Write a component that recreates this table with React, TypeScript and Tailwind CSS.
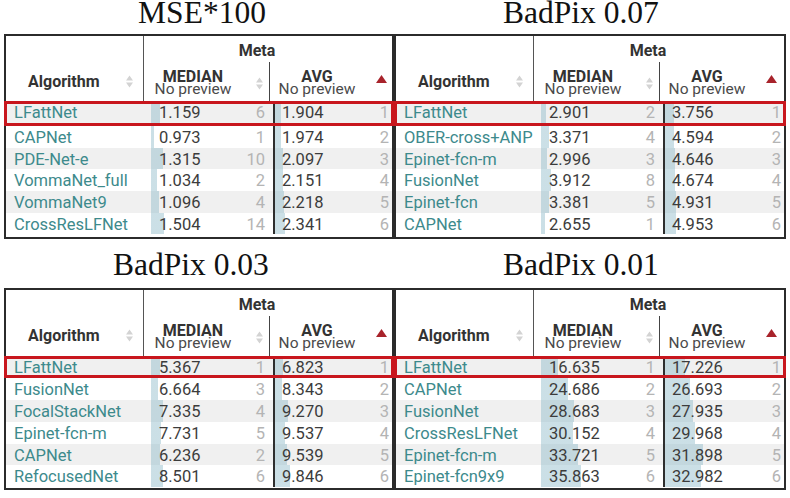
import React from "react";

type Row = { n: string; m: string; mr: number; mb: number; a: string; ar: number; ab: number };

const r = (n: string, m: string, mr: number, mb: number, a: string, ar: number, ab: number): Row => ({ n, m, mr, mb, a, ar, ab });

type Tbl = { title: string; shift: string; width: string; rows: Row[] };

const topTables: Tbl[] = [
  {
    title: "MSE*100",
    shift: "pl-[6px]",
    width: "w-[390px]",
    rows: [
      r("LFattNet", "1.159", 6, 9, "1.904", 1, 6),
      r("CAPNet", "0.973", 1, 3, "1.974", 2, 6),
      r("PDE-Net-e", "1.315", 10, 12, "2.097", 3, 8),
      r("VommaNet_full", "1.034", 2, 6, "2.151", 4, 8),
      r("VommaNet9", "1.096", 4, 8, "2.218", 5, 9),
      r("CrossResLFNet", "1.504", 14, 13, "2.341", 6, 10),
    ],
  },
  {
    title: "BadPix 0.07",
    shift: "pr-[18px]",
    width: "w-[392px]",
    rows: [
      r("LFattNet", "2.901", 2, 5, "3.756", 1, 9),
      r("OBER-cross+ANP", "3.371", 4, 8, "4.594", 2, 9),
      r("Epinet-fcn-m", "2.996", 3, 6, "4.646", 3, 10),
      r("FusionNet", "3.912", 8, 10, "4.674", 4, 10),
      r("Epinet-fcn", "3.381", 5, 8, "4.931", 5, 11),
      r("CAPNet", "2.655", 1, 4, "4.953", 6, 11),
    ],
  },
];

const bottomTables: Tbl[] = [
  {
    title: "BadPix 0.03",
    shift: "pr-[16px]",
    width: "w-[390px]",
    rows: [
      r("LFattNet", "5.367", 1, 9, "6.823", 1, 8),
      r("FusionNet", "6.664", 3, 7, "8.343", 2, 7),
      r("FocalStackNet", "7.335", 4, 12, "9.270", 3, 13),
      r("Epinet-fcn-m", "7.731", 5, 10, "9.537", 4, 10),
      r("CAPNet", "6.236", 2, 9, "9.539", 5, 12),
      r("RefocusedNet", "8.501", 6, 12, "9.846", 6, 15),
    ],
  },
  {
    title: "BadPix 0.01",
    shift: "pr-[18px]",
    width: "w-[392px]",
    rows: [
      r("LFattNet", "16.635", 1, 17, "17.226", 1, 20),
      r("CAPNet", "24.686", 2, 27, "26.693", 2, 25),
      r("FusionNet", "28.683", 3, 33, "27.935", 3, 28),
      r("CrossResLFNet", "30.152", 4, 32, "29.968", 4, 30),
      r("Epinet-fcn-m", "33.721", 5, 37, "31.898", 5, 38),
      r("Epinet-fcn9x9", "35.863", 6, 40, "32.982", 6, 36),
    ],
  },
];

const bar = (w: number) => ({
  backgroundImage: `linear-gradient(90deg, rgba(140,185,200,0.45) ${w}px, transparent ${w}px)`,
});

const SortIcon = () => (
  <svg width="7" height="13" viewBox="0 0 7 13">
    <path d="M0 5.5 L3.5 0.5 L7 5.5 Z M0 7.5 L3.5 12.5 L7 7.5 Z" fill="#d3d3d3" />
  </svg>
);

const UpIcon = () => (
  <svg width="11" height="8" viewBox="0 0 11 8">
    <path d="M0 8 L5.5 0 L11 8 Z" fill="#a8232b" />
  </svg>
);

type Variant = {
  headerH: string;
  row0H: string;
  row0Text: string;
  redH: string;
  redTop: string;
  bodyPb: string;
};

const topVariant: Variant = {
  headerH: "h-[65px]",
  row0H: "h-[25px]",
  row0Text: "leading-[23.5px]",
  redH: "h-[25px]",
  redTop: "top-[65px]",
  bodyPb: "pb-[3px]",
};

const bottomVariant: Variant = {
  headerH: "h-[66px]",
  row0H: "h-[22.5px]",
  row0Text: "leading-[23px]",
  redH: "h-[22.5px]",
  redTop: "top-[66px]",
  bodyPb: "pb-[1px]",
};

function DataTable({ t, v }: { t: Tbl; v: Variant }) {
  return (
    <div className={`relative border-2 border-[#2b2b2b] bg-white font-['Roboto',sans-serif]`}>
      <div className={`flex ${v.headerH}`}>
        <div className="w-[138px] border-r border-[#555] flex items-start pt-[36px]">
          <div className="flex items-center w-full h-[19px]">
            <span className="pl-[22px] text-[16px] leading-[19px] font-bold text-[#333]">Algorithm</span>
            <span className="ml-auto mr-[10px] flex"><SortIcon /></span>
          </div>
        </div>
        <div className="flex-1 flex flex-col">
          <div className="h-[26px] pt-[5px] pr-[22px] text-center text-[16px] leading-[19px] font-bold text-[#333]">Meta</div>
          <div className="flex-1 flex">
            <div className="w-[126px] border-r border-[#444] flex items-start">
              <div className="w-[98px] pt-[9px] text-center">
                <div className="text-[16px] leading-[12px] font-bold text-[#333]">MEDIAN</div>
                <div className="text-[15.5px] leading-[13px] text-[#4a4a4a]">No preview</div>
              </div>
              <span className="ml-[14px] mt-[15px] flex"><SortIcon /></span>
            </div>
            <div className="flex-1 flex items-start">
              <div className="w-[94px] pt-[9px] text-center">
                <div className="text-[16px] leading-[12px] font-bold text-[#333]">AVG</div>
                <div className="text-[15.5px] leading-[13px] text-[#4a4a4a]">No preview</div>
              </div>
              <span className="ml-[12px] mt-[13px] flex"><UpIcon /></span>
            </div>
          </div>
        </div>
      </div>
      <div className={`flex flex-col ${v.bodyPb} text-[16.5px]`}>
        {t.rows.map((row, i) => {
          const first = i === 0;
          const h = first ? v.row0H : "h-[21.7px]";
          const txt = first ? v.row0Text : "pt-[2px] leading-[19.7px]";
          const bg = i % 2 === 0 ? "bg-[#f0f0f0]" : "bg-white";
          return (
            <div key={i} className={`flex ${h} ${bg}`}>
              <div className={`w-[145px] h-full pl-[8px] ${txt} text-[#3d8a8c] whitespace-nowrap overflow-hidden`}>{row.n}</div>
              <div className={`w-[122px] h-full flex justify-between pl-[8px] pr-[8px] ${txt}`} style={bar(row.mb)}>
                <span className="text-[#3c3c3c]">{row.m}</span>
                <span className="text-[#b4b4b4]">{row.mr}</span>
              </div>
              <div className={`flex-1 h-full flex justify-between border-l-2 border-[#2e2e2e] pl-[7px] pr-[3px] ${txt}`} style={bar(row.ab)}>
                <span className="text-[#3c3c3c]">{row.a}</span>
                <span className="text-[#b4b4b4]">{row.ar}</span>
              </div>
            </div>
          );
        })}
      </div>
      <div className={`absolute left-[-2px] right-[-2px] ${v.redTop} ${v.redH} border-[3px] border-[#c8161d] pointer-events-none`} />
    </div>
  );
}

export default function App() {
  return (
    <div className="w-[790px] h-[498px] bg-white pl-[4px] overflow-hidden">
      <div className="flex">
        {topTables.map((t) => (
          <div key={t.title} className={`${t.width} flex flex-col`}>
            <div className={`h-[34px] text-center ${t.shift} font-['Liberation_Serif',serif] text-[31.5px] leading-[25px] text-[#111] whitespace-nowrap`}>
              {t.title}
            </div>
            <DataTable t={t} v={topVariant} />
          </div>
        ))}
      </div>
      <div className="flex">
        {bottomTables.map((t) => (
          <div key={t.title} className={`${t.width} flex flex-col`}>
            <div className={`h-[48.5px] pt-[13px] text-center ${t.shift} font-['Liberation_Serif',serif] text-[31.5px] leading-[26px] text-[#111] whitespace-nowrap`}>
              {t.title}
            </div>
            <DataTable t={t} v={bottomVariant} />
          </div>
        ))}
      </div>
    </div>
  );
}
